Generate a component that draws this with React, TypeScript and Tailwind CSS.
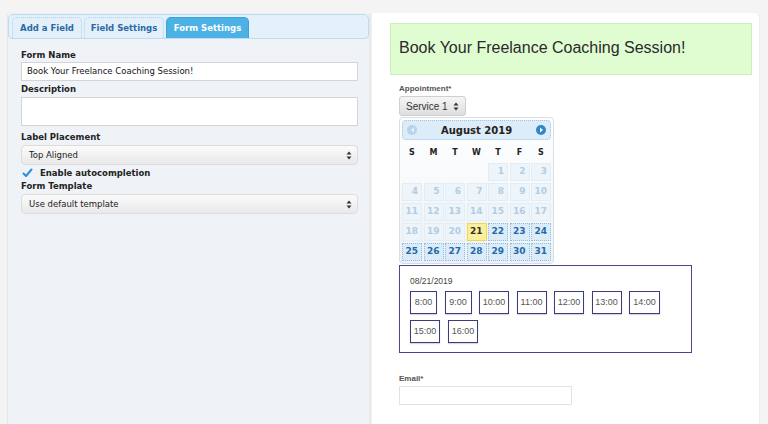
import React from "react";

const leftFont = { fontFamily: '"DejaVu Sans", Verdana, sans-serif' };

function SelectArrows() {
  return (
    <svg width="6" height="9" viewBox="0 0 6 9" className="shrink-0">
      <path d="M3 0.5 L5.5 3.5 L0.5 3.5 Z" fill="#333" />
      <path d="M3 8.5 L5.5 5.5 L0.5 5.5 Z" fill="#333" />
    </svg>
  );
}

function LeftSelect({ value }: { value: string }) {
  return (
    <div className="h-[20px] w-[337px] rounded-[4px] border border-[#dcdcdc] bg-gradient-to-b from-[#fbfbfb] to-[#e9e9e9] flex items-center justify-between pl-[7px] pr-[5px] text-[8.5px] text-[#222]">
      <span>{value}</span>
      <SelectArrows />
    </div>
  );
}

function Tab({ label, active }: { label: string; active?: boolean }) {
  return (
    <div
      className={
        active
          ? "h-[21px] pt-[1px] rounded-t-[5px] border border-b-0 border-[#3aa3da] bg-[#4cb2e6] text-white font-bold text-[8.5px] flex items-center justify-center"
          : "h-[21px] pt-[1px] rounded-t-[5px] border border-b-0 border-dotted border-[#a9d2ec] bg-[#e3f0fa] text-[#2b6aa6] font-bold text-[8.5px] flex items-center justify-center"
      }
    >
      {label}
    </div>
  );
}

function LeftPanel() {
  return (
    <div
      className="mt-[14px] ml-[7px] w-[363px] h-[420px] bg-[#eff3f7] border-l border-r border-[#e3e6ea] shadow-[1px_0_2px_rgba(0,0,0,0.06)]"
      style={leftFont}
    >
      <div className="h-[25px] rounded-t-[5px] rounded-b-[4px] border border-[#bcdcf0] bg-[#e4f1fa] flex items-end gap-[2px] pl-[3px]">
        <div className="w-[70px]"><Tab label="Add a Field" /></div>
        <div className="w-[80px]"><Tab label="Field Settings" /></div>
        <div className="w-[83px]"><Tab label="Form Settings" active /></div>
      </div>
      <div className="pl-[13px] pt-[10px] flex flex-col text-[#222]">
        <div className="text-[8.5px] font-bold leading-[12px] h-[13px]">Form Name</div>
        <div className="h-[19px] w-[337px] border border-[#d4d4d4] bg-white flex items-center pl-[5px] text-[8.5px] text-[#111]">
          Book Your Freelance Coaching Session!
        </div>
        <div className="mt-[2px] text-[8.5px] font-bold leading-[12px] h-[13px]">Description</div>
        <div className="mt-[1px] h-[29px] w-[337px] border border-[#d4d4d4] bg-white" />
        <div className="mt-[5px] text-[8.5px] font-bold leading-[12px] h-[14px]">Label Placement</div>
        <LeftSelect value="Top Aligned" />
        <div className="mt-[1px] h-[14px] flex items-center gap-[7px] pl-[1px]">
          <svg width="11" height="10" viewBox="0 0 11 10">
            <path d="M1.5 5.5 L4 8 L9.5 1.5" stroke="#2b8fd6" strokeWidth="2" fill="none" strokeLinecap="round" strokeLinejoin="round" />
          </svg>
          <span className="text-[8.5px] font-bold">Enable autocompletion</span>
        </div>
        <div className="text-[8.5px] font-bold leading-[12px] h-[14px]">Form Template</div>
        <LeftSelect value="Use default template" />
      </div>
    </div>
  );
}

type Cell = { d: number | null; state: "empty" | "off" | "today" | "on" };

function buildCells(): Cell[] {
  const cells: Cell[] = [];
  for (let i = 0; i < 4; i++) cells.push({ d: null, state: "empty" });
  for (let d = 1; d <= 31; d++) {
    cells.push({ d, state: d < 21 ? "off" : d === 21 ? "today" : "on" });
  }
  return cells;
}

function Calendar() {
  const cells = buildCells();
  return (
    <div
      className="mt-[1px] w-[155px] rounded-[4px] border border-[#d9dee4] bg-gradient-to-b from-[#ffffff] to-[#eef2f6] p-[2px] pb-[2px]"
      style={{ fontFamily: '"DejaVu Sans", Verdana, sans-serif' }}
    >
      <div className="h-[20px] rounded-[4px] border border-dotted border-[#9ec6e6] bg-[#dcecf8] flex items-center justify-between px-[4px]">
        <div className="w-[10px] h-[10px] rounded-full bg-[#b9d3ea] flex items-center justify-center">
          <svg width="5" height="6" viewBox="0 0 5 6"><path d="M4 0.5 L1 3 L4 5.5 Z" fill="#eaf3fb" /></svg>
        </div>
        <span className="text-[10px] font-bold text-[#222]">August 2019</span>
        <div className="w-[10px] h-[10px] rounded-full bg-[#2f86c8] flex items-center justify-center">
          <svg width="5" height="6" viewBox="0 0 5 6"><path d="M1 0.5 L4 3 L1 5.5 Z" fill="#ffffff" /></svg>
        </div>
      </div>
      <div className="grid grid-cols-7 gap-x-[1.5px] mt-[8px] mb-[5px]">
        {["S", "M", "T", "W", "T", "F", "S"].map((d, i) => (
          <div key={i} className="text-center text-[8px] font-bold text-[#222] leading-[10px]">{d}</div>
        ))}
      </div>
      <div className="grid grid-cols-7 gap-x-[1.5px] gap-y-[2px]">
        {cells.map((c, i) => {
          if (c.state === "empty") return <div key={i} className="h-[18px]" />;
          const base = "h-[18px] flex items-center justify-end pr-[3px] text-[9px] font-bold border";
          if (c.state === "off")
            return (
              <div key={i} className={base + " border-[#e2edf6] bg-[#edf4fa] text-[#b2cde2]"}>{c.d}</div>
            );
          if (c.state === "today")
            return (
              <div key={i} className={base + " border-[#f5d54a] bg-[#fcef9c] text-[#333]"}>{c.d}</div>
            );
          return (
            <div key={i} className={base + " border-dotted border-[#8fbfe0] bg-[#dbebf8] text-[#1f6aa8]"}>{c.d}</div>
          );
        })}
      </div>
    </div>
  );
}

function Slot({ t, w }: { t: string; w: string }) {
  return (
    <div className={"h-[23px] border border-[#3e3a82] bg-white flex items-center justify-center text-[9px] text-[#555] shadow-[0_1px_1px_rgba(0,0,0,0.15)] " + w}>
      {t}
    </div>
  );
}

function RightPanel() {
  return (
    <div
      className="mt-[13px] ml-[2px] w-[388px] h-[420px] bg-white rounded-tr-[5px] border-r border-[#ececec] pl-[18px] pt-[10px] pr-[8px]"
      style={{ fontFamily: '"Liberation Sans", Arial, sans-serif' }}
    >
      <div className="h-[52px] w-[362px] bg-[#e0fdd2] border border-[#c9f0b6] flex items-center pl-[8px] pb-[2px]">
        <span className="text-[16px] text-[#2a2a2a]">Book Your Freelance Coaching Session!</span>
      </div>
      <div className="pl-[9px]">
        <div className="mt-[9px] text-[8px] font-bold text-[#555] leading-[10px]">Appointment*</div>
        <div className="mt-[2px] h-[20px] w-[67px] rounded-[3px] border border-[#cfcfcf] bg-gradient-to-b from-[#f6f6f6] to-[#dedede] flex items-center justify-between pl-[6px] pr-[6px] text-[10px] text-[#333]">
          <span>Service 1</span>
          <SelectArrows />
        </div>
        <Calendar />
        <div className="mt-[1px] w-[293px] h-[88px] border border-[#4a4790] pl-[10px] pt-[10px]">
          <div className="text-[8.5px] text-[#444] leading-[10px]">08/21/2019</div>
          <div className="mt-[5px] flex gap-x-[7.5px]">
            <Slot t="8:00" w="w-[27px]" />
            <Slot t="9:00" w="w-[27px]" />
            <Slot t="10:00" w="w-[30px]" />
            <Slot t="11:00" w="w-[30px]" />
            <Slot t="12:00" w="w-[30px]" />
            <Slot t="13:00" w="w-[30px]" />
            <Slot t="14:00" w="w-[31px]" />
          </div>
          <div className="mt-[6px] flex gap-x-[8px]">
            <Slot t="15:00" w="w-[30px]" />
            <Slot t="16:00" w="w-[30px]" />
          </div>
        </div>
        <div className="mt-[21px] text-[8px] font-bold text-[#555] leading-[10px]">Email*</div>
        <div className="mt-[2px] h-[19px] w-[173px] border border-[#e2e2e2] bg-white" />
      </div>
    </div>
  );
}

export default function App() {
  return (
    <div className="w-[768px] h-[424px] overflow-hidden bg-[#f4f4f4] flex items-start">
      <LeftPanel />
      <RightPanel />
    </div>
  );
}
